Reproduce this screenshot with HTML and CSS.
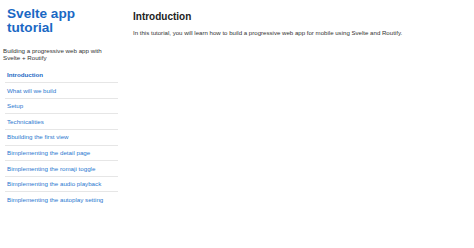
FILE: index.html
```html
<!DOCTYPE html>
<html>
<head>
<meta charset="utf-8">
<link rel="stylesheet" href="styles.css">
</head>
<body>
<div class="page">
  <aside class="sidebar">
    <h1 class="title">Svelte app tutorial</h1>
    <p class="subtitle">Building a progressive web app with Svelte + Routify</p>
    <ul class="nav">
      <li class="active"><a>Introduction</a></li>
      <li><a>What will we build</a></li>
      <li><a>Setup</a></li>
      <li><a>Technicalities</a></li>
      <li><a>Bbuilding the first view</a></li>
      <li><a>Bimplementing the detail page</a></li>
      <li><a>Bimplementing the romaji toggle</a></li>
      <li><a>Bimplementing the audio playback</a></li>
      <li><a>Bimplementing the autoplay setting</a></li>
    </ul>
  </aside>
  <main class="content">
    <h2 class="heading">Introduction</h2>
    <p class="intro">In this tutorial, you will learn how to build a progressive web app for mobile using Svelte and Routify.</p>
  </main>
</div>
</body>
</html>
```
FILE: styles.css
```css
html, body {
  margin: 0;
  padding: 0;
  background: #ffffff;
}
body {
  font-family: "Liberation Sans", Arial, sans-serif;
  color: #222;
}
.page {
  display: flex;
  padding: 7px 0 0 3px;
}
.sidebar {
  width: 115px;
  flex: none;
}
.title {
  margin: 0 0 12px 4px;
  font-size: 13.6px;
  line-height: 14px;
  font-weight: bold;
  color: #1a68c4;
}
.subtitle {
  margin: 0 0 6px 0;
  font-size: 6.2px;
  line-height: 7.3px;
  color: #333;
}
.nav {
  list-style: none;
  margin: 0 0 0 2px;
  padding: 0;
}
.nav li {
  padding: 3.5px 0 3.5px 2px;
  font-size: 6.2px;
  line-height: 7.6px;
  color: #2b78cf;
}
.nav li + li {
  border-top: 1px solid #e6e6e6;
}
.nav li.active {
  font-weight: bold;
  color: #1a68c4;
}
.content {
  margin-left: 15px;
  padding-top: 3.8px;
}
.heading {
  margin: 0 0 5.2px 0;
  font-size: 10px;
  line-height: 12px;
  font-weight: bold;
  color: #222;
}
.intro {
  margin: 0;
  font-size: 6.1px;
  line-height: 9px;
  color: #333;
}
```
